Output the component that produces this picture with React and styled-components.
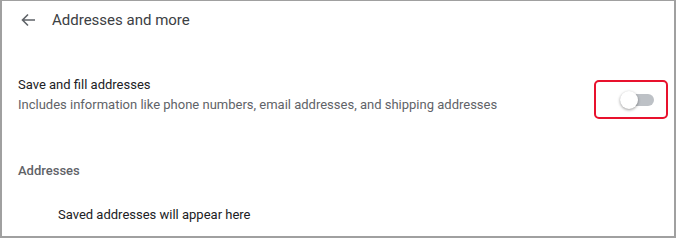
import React from "react";
import styled, { createGlobalStyle } from "styled-components";

const GlobalStyle = createGlobalStyle`
  html, body {
    margin: 0;
    padding: 0;
    background: #ffffff;
  }
  body {
    font-family: Roboto, "Liberation Sans", Arial, sans-serif;
  }
`;

const Frame = styled.div`
  width: 676px;
  height: 238px;
  box-sizing: border-box;
  border: 1px solid #a0a0a0;
  border-left-width: 2px;
  border-bottom-width: 2px;
  border-right-width: 2px;
  background: #fff;
  overflow: hidden;
`;

const Header = styled.div`
  display: flex;
  align-items: center;
  height: 38px;
  padding-left: 16px;
`;

const BackButton = styled.div`
  width: 20px;
  height: 20px;
  display: flex;
  align-items: center;
  justify-content: center;
  margin-right: 14px;
`;

const Title = styled.div`
  font-size: 15px;
  color: #3c4043;
  font-weight: 400;
`;

const SettingRow = styled.div`
  display: flex;
  align-items: flex-start;
  justify-content: space-between;
  padding: 38px 6px 0 16px;
`;

const SettingText = styled.div`
  display: flex;
  flex-direction: column;
  gap: 5px;
`;

const Label = styled.div`
  font-size: 13px;
  color: #202124;
`;

const SubLabel = styled.div`
  font-size: 13px;
  color: #5f6368;
`;

const Highlight = styled.div`
  width: 74px;
  height: 39px;
  box-sizing: border-box;
  border: 2px solid #e8112d;
  border-radius: 5px;
  display: flex;
  align-items: center;
  justify-content: flex-end;
  padding-right: 12px;
  margin-top: 3px;
`;

const Toggle = styled.div`
  position: relative;
  width: 34px;
  height: 12px;
  border-radius: 6px;
  background: #bdc1c6;
`;

const Knob = styled.div`
  position: absolute;
  left: ${({ $on }) => ($on ? "16px" : "0px")};
  top: -3px;
  width: 18px;
  height: 18px;
  border-radius: 50%;
  background: #ffffff;
  box-shadow: 0 1px 3px rgba(0, 0, 0, 0.4);
`;

const SectionTitle = styled.div`
  font-size: 13px;
  font-weight: 500;
  color: #5f6368;
  padding: 44px 0 0 16px;
`;

const EmptyMessage = styled.div`
  font-size: 13px;
  color: #202124;
  padding: 29px 0 0 56px;
`;

const BackArrow = () => (
  <svg width="16" height="16" viewBox="0 0 16 16">
    <path
      d="M15 8H2.5M8 2.5L2.5 8L8 13.5"
      fill="none"
      stroke="#5f6368"
      strokeWidth="1.6"
    />
  </svg>
);

const App = () => {
  return (
    <>
      <GlobalStyle />
      <Frame>
        <Header>
          <BackButton>
            <BackArrow />
          </BackButton>
          <Title>Addresses and more</Title>
        </Header>
        <SettingRow>
          <SettingText>
            <Label>Save and fill addresses</Label>
            <SubLabel>
              Includes information like phone numbers, email addresses, and
              shipping addresses
            </SubLabel>
          </SettingText>
          <Highlight>
            <Toggle>
              <Knob $on={false} />
            </Toggle>
          </Highlight>
        </SettingRow>
        <SectionTitle>Addresses</SectionTitle>
        <EmptyMessage>Saved addresses will appear here</EmptyMessage>
      </Frame>
    </>
  );
};

export default App;
